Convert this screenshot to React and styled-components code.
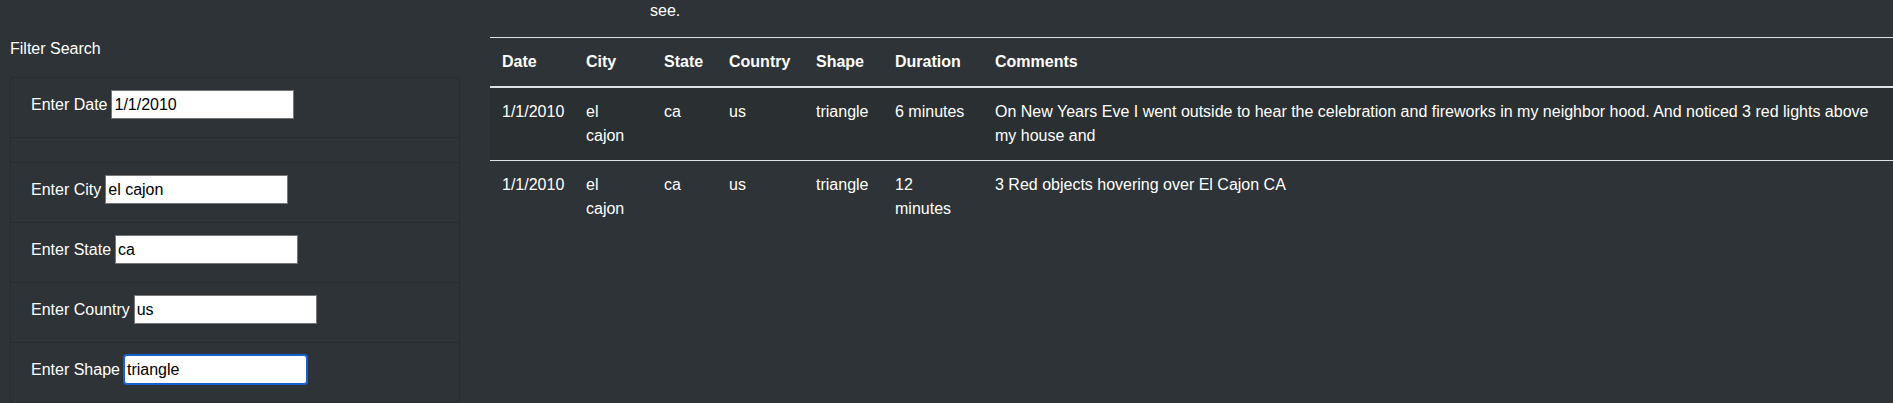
import React, { useEffect, useRef } from 'react';
import styled, { createGlobalStyle } from 'styled-components';

const textColor = '#ffffff';
const lineColor = '#dee2e6';
const cellPadding = 12;

const GlobalStyle = createGlobalStyle`
  html, body {
    margin: 0;
    padding: 0;
    background-color: #2e3337;
    overflow: hidden;
  }

  body {
    font-family: "Liberation Sans", Arial, Helvetica, sans-serif;
    font-size: 16px;
    line-height: 1.5;
    color: ${textColor};
  }
`;

/* ----------------- Layout ----------------- */

const Page = styled.div`
  display: grid;
  grid-template-columns: 475px 1fr;
  width: 1893px;
  height: 403px;
`;

const Sidebar = styled.aside`
  padding: 37px 15px 0 10px;
`;

const Main = styled.main`
  min-width: 0;
  padding-left: 15px;
`;

/* ----------------- Filters ----------------- */

const SidebarTitle = styled.div`
  line-height: 24px;
  margin-bottom: 16px;
`;

const FilterCard = styled.ul`
  list-style: none;
  margin: 0;
  padding: 0;
  border: 1px solid rgba(0, 0, 0, 0.13);
  border-radius: 4px;
`;

const FilterItem = styled.li`
  display: flex;
  align-items: center;
  padding: ${({ $empty }) => ($empty ? '12px 20px' : '12px 20px 18px')};
  border-bottom: 1px solid rgba(0, 0, 0, 0.13);

  &:last-child {
    border-bottom: none;
  }
`;

const Label = styled.label`
  margin-right: 4px;
  white-space: nowrap;
`;

const TextInput = styled.input`
  box-sizing: border-box;
  width: 183px;
  height: 29px;
  padding: 1px 2px;
  font-family: inherit;
  font-size: 16px;
  color: #000;
  background: #fff;
  border: 1px solid ${({ $focused }) => ($focused ? '#1760d4' : '#767676')};
  border-radius: ${({ $focused }) => ($focused ? '3px' : '0')};
  box-shadow: ${({ $focused }) => ($focused ? '0 0 0 1px #1760d4' : 'none')};
  outline: none;
  caret-color: #000;
`;

/* ----------------- Results ----------------- */

const Intro = styled.p`
  margin: -1px 0 14px;
  padding-left: 160px;
  line-height: 24px;
`;

const Table = styled.table`
  width: 1403px;
  table-layout: fixed;
  border-collapse: collapse;
  color: ${textColor};
`;

const HeadCell = styled.th`
  width: ${({ $width }) => ($width ? `${$width - cellPadding * 2}px` : 'auto')};
  padding: ${cellPadding}px;
  text-align: left;
  font-weight: bold;
  vertical-align: bottom;
  border-top: 1px solid ${lineColor};
  border-bottom: 2px solid ${lineColor};
`;

const Row = styled.tr`
  background-color: ${({ $striped }) => ($striped ? 'rgba(0, 0, 0, 0.08)' : 'transparent')};
  border-bottom: 1px solid ${({ $last }) => ($last ? 'transparent' : lineColor)};
`;

const Cell = styled.td`
  padding: ${cellPadding}px;
  vertical-align: top;
`;

// widths are the full column widths, padding included
const columns = [
  { label: 'Date', width: 84 },
  { label: 'City', width: 78 },
  { label: 'State', width: 65 },
  { label: 'Country', width: 87 },
  { label: 'Shape', width: 79 },
  { label: 'Duration', width: 100 },
  { label: 'Comments' },
];

const sightings = [
  {
    date: '1/1/2010',
    city: 'el cajon',
    state: 'ca',
    country: 'us',
    shape: 'triangle',
    duration: '6 minutes',
    comments:
      'On New Years Eve I went outside to hear the celebration and fireworks in my neighbor hood. And noticed 3 red lights above my house and',
  },
  {
    date: '1/1/2010',
    city: 'el cajon',
    state: 'ca',
    country: 'us',
    shape: 'triangle',
    duration: '12 minutes',
    comments: '3 Red objects hovering over El Cajon CA',
  },
];

const filters = [
  { id: 'datetime', label: 'Enter Date', value: '1/1/2010' },
  { id: 'spacer', empty: true },
  { id: 'city', label: 'Enter City', value: 'el cajon' },
  { id: 'state', label: 'Enter State', value: 'ca' },
  { id: 'country', label: 'Enter Country', value: 'us' },
  { id: 'shape', label: 'Enter Shape', value: 'triangle', focused: true },
];

function Filter({ id, label, value, focused }) {
  const ref = useRef(null);

  useEffect(() => {
    if (focused && ref.current) {
      ref.current.focus();
      ref.current.setSelectionRange(value.length, value.length);
    }
  }, [focused, value]);

  return (
    <FilterItem>
      <Label htmlFor={id}>{label}</Label>
      <TextInput
        ref={ref}
        id={id}
        type="text"
        defaultValue={value}
        $focused={focused}
      />
    </FilterItem>
  );
}

export default function App() {
  return (
    <>
      <GlobalStyle />
      <Page>
        <Sidebar>
          <SidebarTitle>Filter Search</SidebarTitle>
          <FilterCard>
            {filters.map((f) => (f.empty ? <FilterItem key={f.id} $empty /> : <Filter key={f.id} {...f} />))}
          </FilterCard>
        </Sidebar>

        <Main>
          <Intro>see.</Intro>
          <Table>
            <thead>
              <tr>
                {columns.map((c) => (
                  <HeadCell key={c.label} $width={c.width}>
                    {c.label}
                  </HeadCell>
                ))}
              </tr>
            </thead>
            <tbody>
              {sightings.map((s, i) => (
                <Row key={s.duration} $striped={i % 2 === 0} $last={i === sightings.length - 1}>
                  <Cell>{s.date}</Cell>
                  <Cell>{s.city}</Cell>
                  <Cell>{s.state}</Cell>
                  <Cell>{s.country}</Cell>
                  <Cell>{s.shape}</Cell>
                  <Cell>{s.duration}</Cell>
                  <Cell>{s.comments}</Cell>
                </Row>
              ))}
            </tbody>
          </Table>
        </Main>
      </Page>
    </>
  );
}
